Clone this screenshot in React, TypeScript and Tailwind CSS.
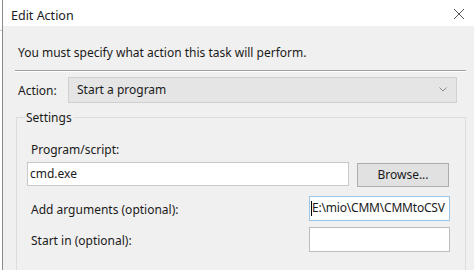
import React from "react"

const font = { fontFamily: '"Noto Sans", "Open Sans", sans-serif' }

const App = () => {
  return (
    <div className="w-[474px] h-[270px] flex overflow-hidden bg-white text-[#1a1a1a]" style={font}>
      {/* window behind */}
      <div className="w-[3px] flex flex-col bg-white border-r border-[#8a8a8a]">
        <div className="h-[31px] border-b border-[#c8c8c8]" />
      </div>

      <div className="flex-1 flex flex-col">
        {/* title bar */}
        <div className="h-[31px] bg-white flex items-center justify-between pl-[8px] pr-[9px] pt-[7px]">
          <span className="text-[12.5px]">Edit Action</span>
          <svg width="12" height="12" viewBox="0 0 12 12" className="mb-[5px]">
            <path d="M1 1 L11 11 M11 1 L1 11" stroke="#555" strokeWidth="1" />
          </svg>
        </div>

        <div className="flex-1 bg-[#f0f0f0] text-[12px] pl-[12px] pr-[7px] pt-[18px]">
          <p className="pl-[3px] leading-[18px]">
            You must specify what action this task will perform.
          </p>
          <div className="mt-[8px] h-[2px] border-t border-[#a0a0a0] bg-white mr-[1px]" />

          {/* action */}
          <div className="mt-[5px] flex items-center mr-[10px]">
            <span className="w-[53px] pl-[3px] pt-[2px]">Action:</span>
            <div className="flex-1 h-[26px] bg-[#e5e5e5] border border-[#d0d0d0] flex items-center justify-between pl-[8px] pr-[9px]">
              <span>Start a program</span>
              <svg width="8" height="5" viewBox="0 0 8 5">
                <path d="M0.5 0.5 L4 4 L7.5 0.5" fill="none" stroke="#8a8a8a" strokeWidth="1" />
              </svg>
            </div>
          </div>

          {/* settings group */}
          <fieldset className="mt-[6px] ml-[1px] mr-[1px] border border-[#dcdcdc] border-b-0 pl-[10px] pr-[15px] pt-[14px] pb-[20px]">
            <legend className="leading-[18px] px-[1px] ml-[-2px]">Settings</legend>
            <div className="leading-[18px] pl-[4px]">Program/script:</div>
            <div className="mt-[3px] flex items-start gap-[8px]">
              <div className="w-[322px] shrink-0 h-[24px] bg-white border border-[#c8c8c8] flex items-center pl-[2px]">
                cmd.exe
              </div>
              <div className="mt-[1px] w-[92px] shrink-0 h-[24px] bg-[#e1e1e1] border border-[#adadad] flex items-center justify-center">
                Browse...
              </div>
            </div>
            <div className="mt-[9px] flex items-center justify-between">
              <span className="pl-[4px] pt-[4px]">Add arguments (optional):</span>
              <div className="w-[141px] h-[25px] bg-white border border-[#9cc6e8] flex items-center pl-[1px] whitespace-nowrap overflow-hidden">
                <span className="w-[1px] h-[15px] bg-black shrink-0" />
                <span className="tracking-[-0.2px]">E:\mio\CMM\CMMtoCSV</span>
              </div>
            </div>
            <div className="mt-[6px] flex items-center justify-between">
              <span className="pl-[4px] pt-[4px]">Start in (optional):</span>
              <div className="w-[141px] h-[25px] bg-white border border-[#bdbdbd]" />
            </div>
          </fieldset>
        </div>
      </div>
    </div>
  )
}

export default App
